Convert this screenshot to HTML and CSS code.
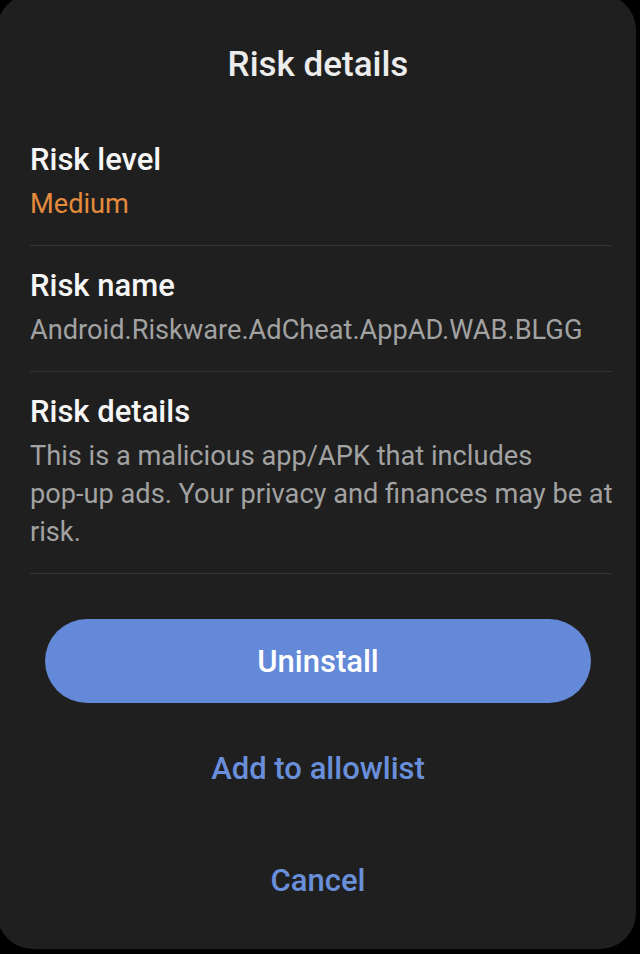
FILE: index.html
```html
<!DOCTYPE html>
<html lang="en">
<head>
<meta charset="utf-8">
<title>Risk details</title>
<link rel="stylesheet" href="styles.css">
</head>
<body>
<div class="dialog">
  <h1 class="dialog-title">Risk details</h1>
  <div class="content">
    <section class="item">
      <h2 class="item-title">Risk level</h2>
      <p class="item-value level-medium">Medium</p>
    </section>
    <section class="item">
      <h2 class="item-title">Risk name</h2>
      <p class="item-value">Android.Riskware.AdCheat.AppAD.WAB.BLGG</p>
    </section>
    <section class="item">
      <h2 class="item-title">Risk details</h2>
      <p class="item-value">This is a malicious app/APK that includes<br>pop-up ads. Your privacy and finances may be at<br>risk.</p>
    </section>
  </div>
  <div class="actions">
    <button class="btn-primary">Uninstall</button>
    <button class="btn-text btn-allow">Add to allowlist</button>
    <button class="btn-text btn-cancel">Cancel</button>
  </div>
</div>
</body>
</html>
```
FILE: styles.css
```css
html, body {
  margin: 0;
  padding: 0;
  background: #000;
  width: 640px;
  height: 954px;
  overflow: hidden;
}
body {
  font-family: Roboto, "Noto Sans", "Liberation Sans", sans-serif;
}
.dialog {
  box-sizing: border-box;
  width: 639px;
  height: 955px;
  margin-top: -6px;
  margin-left: -3px;
  background: #1f1f1f;
  border-radius: 36px;
  padding-top: 6px;
  padding-left: 3px;
  display: flex;
  flex-direction: column;
}
.dialog-title {
  margin: 0;
  padding: 45px 0 35px;
  line-height: 40px;
  font-size: 35px;
  font-weight: 500;
  color: #ececec;
  text-align: center;
}
.content {
  padding: 0 24px 0 30px;
}
.item {
  padding: 20px 0 22px;
  border-bottom: 1px solid #333333;
}
.item-title {
  margin: 0;
  font-size: 31px;
  line-height: 40px;
  font-weight: 500;
  color: #f6f6f6;
}
.item-value {
  margin: 5px 0 0;
  font-size: 27.2px;
  line-height: 38px;
  font-weight: 400;
  color: #a2a2a2;
  white-space: nowrap;
}
.level-medium {
  color: #e38a3d;
}
.actions {
  display: flex;
  flex-direction: column;
  align-items: stretch;
  padding: 0 45px 0 45px;
}
.btn-primary {
  margin-top: 45px;
  height: 84px;
  border: none;
  border-radius: 42px;
  background: #6389d8;
  color: #ffffff;
  font-family: inherit;
  font-size: 31px;
  font-weight: 500;
  padding: 0;
}
.btn-text {
  border: none;
  background: transparent;
  color: #6a8fda;
  font-family: inherit;
  font-size: 31px;
  font-weight: 500;
  line-height: 40px;
  padding: 0;
}
.btn-allow {
  margin-top: 46px;
}
.btn-cancel {
  margin-top: 72px;
}
```
